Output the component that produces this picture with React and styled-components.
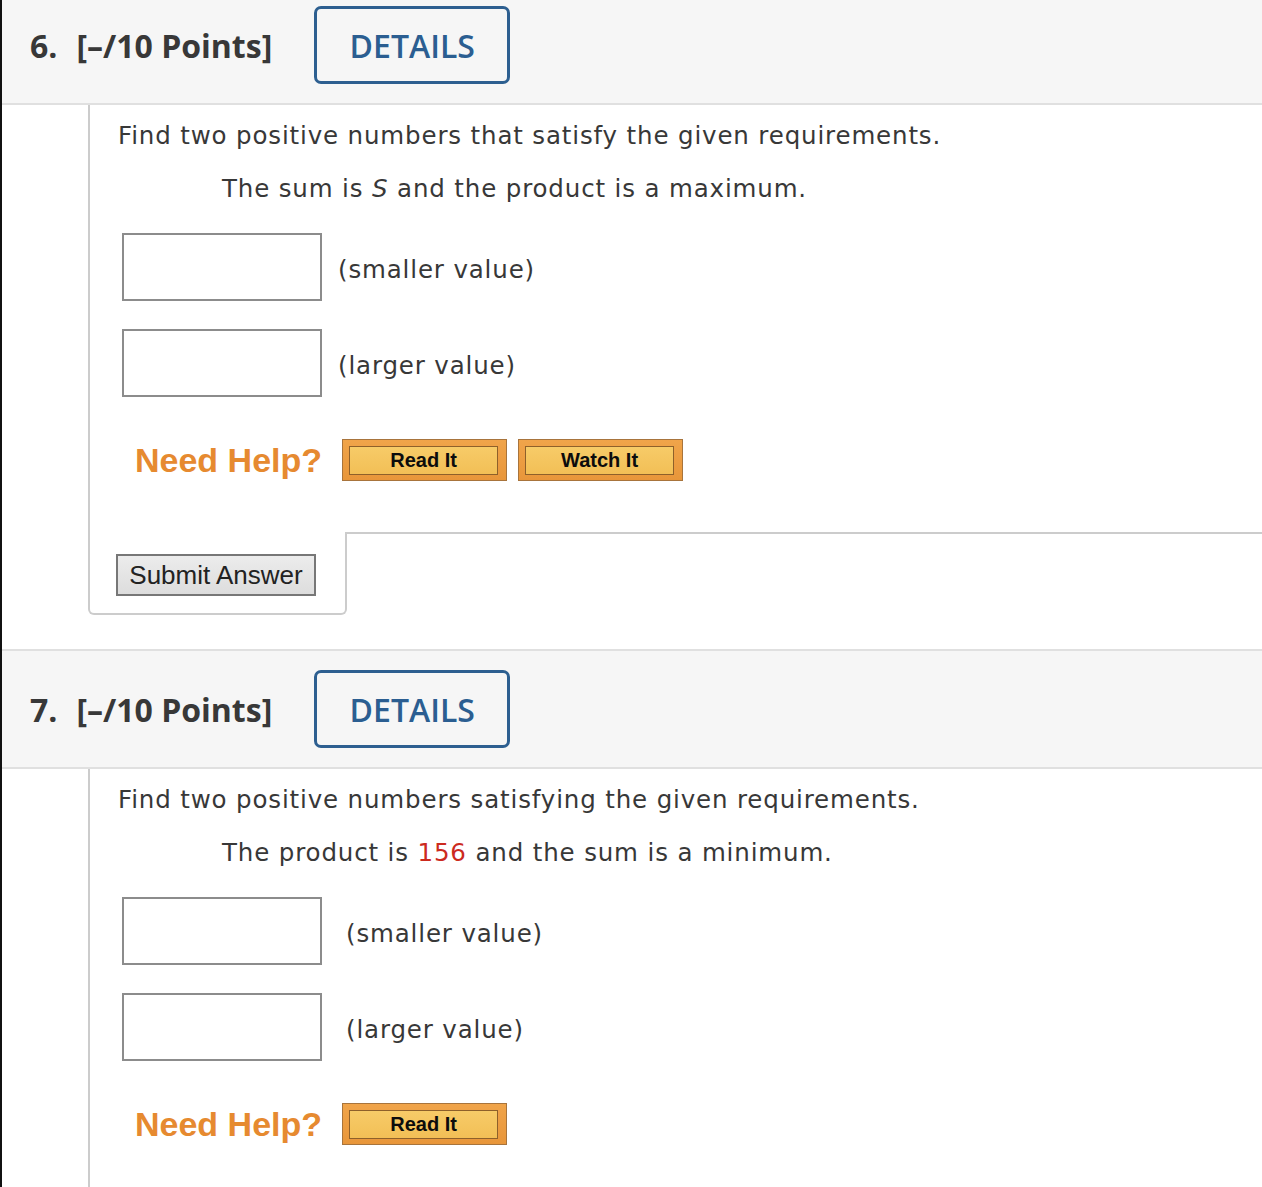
import React from 'react'
import styled, { createGlobalStyle } from 'styled-components'

const GlobalStyle = createGlobalStyle`
  body {
    margin: 0;
    background: #fff;
  }
`

const Page = styled.div`
  border-left: 2px solid #111;
  height: 1187px;
  overflow: hidden;
  box-sizing: border-box;
`

const Header = styled.div`
  display: flex;
  align-items: center;
  background: #f6f6f6;
  border-top: ${p => (p.$first ? 'none' : '2px solid #e0e0e0')};
  border-bottom: 2px solid #e0e0e0;
  padding: ${p => (p.$first ? '6px' : '19px')} 0 19px 28px;
  font-family: 'Open Sans', sans-serif;
  color: #383838;
`

const Number = styled.span`
  font-size: 32px;
  font-weight: 700;
  margin-right: 19px;
`

const Points = styled.span`
  font-size: 32px;
  font-weight: 700;
`

const DetailsButton = styled.div`
  margin-left: 42px;
  width: 196px;
  height: 78px;
  box-sizing: border-box;
  border: 3px solid #2d5f90;
  border-radius: 7px;
  display: flex;
  align-items: center;
  justify-content: center;
  font-size: 32px;
  font-weight: 600;
  color: #2b5e91;
`

const Content = styled.div`
  margin-left: 86px;
  border-left: 2px solid #cccccc;
  padding: 15px 0 ${p => p.$pad || 0}px 28px;
  font-family: 'DejaVu Sans', Verdana, sans-serif;
  color: #383838;
  font-size: 24.5px;
  letter-spacing: 0.85px;
`

const Prompt = styled.p`
  margin: 0;
  line-height: 32px;
`

const Statement = styled.p`
  margin: 21px 0 0 104px;
  line-height: 32px;
`

const Red = styled.span`
  color: #cc2a1e;
`

const AnswerRow = styled.div`
  display: flex;
  align-items: center;
  gap: ${p => p.$gap}px;
  margin: ${p => p.$top}px 0 0 4px;
`

const Label = styled.span`
  padding-top: 4px;
`

const AnswerBox = styled.div`
  width: 200px;
  height: 68px;
  box-sizing: border-box;
  border: 2px solid #8c8c8c;
  background: #fff;
`

const HelpRow = styled.div`
  display: flex;
  align-items: center;
  margin: 42px 0 0 17px;
  gap: 11px;
  letter-spacing: 0;
`

const NeedHelp = styled.span`
  font-family: 'Liberation Sans', Arial, sans-serif;
  font-weight: 700;
  font-size: 34px;
  color: #e68a30;
  margin-right: 9px;
`

const HelpButton = styled.div`
  width: 165px;
  height: 42px;
  box-sizing: border-box;
  border: 1px solid #a8743c;
  background: linear-gradient(#f0a44a, #e8963a);
  padding: 6px 8px 5px 6px;
`

const HelpInner = styled.div`
  height: 100%;
  box-sizing: border-box;
  border: 1px solid #8e602a;
  background: linear-gradient(#f7cb68, #f2bf56);
  display: flex;
  align-items: center;
  justify-content: center;
  font-family: 'Liberation Sans', Arial, sans-serif;
  font-weight: 700;
  font-size: 20px;
  color: #0c0c0c;
`

const Footer = styled.div`
  display: flex;
  margin-left: 86px;
`

const SubmitTab = styled.div`
  width: 259px;
  box-sizing: border-box;
  border: 2px solid #cccccc;
  border-top: none;
  border-radius: 0 0 6px 6px;
  padding: 22px 0 17px 26px;
`

const Filler = styled.div`
  flex: 1;
  border-top: 2px solid #cccccc;
`

const SubmitButton = styled.div`
  width: 200px;
  height: 42px;
  box-sizing: border-box;
  border: 2px solid #777;
  background: linear-gradient(#ececec, #dddddd);
  display: flex;
  align-items: center;
  justify-content: center;
  font-family: 'Liberation Sans', Arial, sans-serif;
  font-size: 26px;
  color: #222;
`

const Gap = styled.div`
  height: 34px;
`

function Answers({ gap }) {
  return (
    <>
      <AnswerRow $gap={gap} $top={28}>
        <AnswerBox />
        <Label>(smaller value)</Label>
      </AnswerRow>
      <AnswerRow $gap={gap} $top={28}>
        <AnswerBox />
        <Label>(larger value)</Label>
      </AnswerRow>
    </>
  )
}

function QuestionHeader({ num, first }) {
  return (
    <Header $first={first}>
      <Number>{num}.</Number>
      <Points>[–/10 Points]</Points>
      <DetailsButton>DETAILS</DetailsButton>
    </Header>
  )
}

export default function App() {
  return (
    <Page>
      <GlobalStyle />
      <QuestionHeader num={6} first />
      <Content $pad={51}>
        <Prompt>Find two positive numbers that satisfy the given requirements.</Prompt>
        <Statement>
          The sum is <i>S</i> and the product is a maximum.
        </Statement>
        <Answers gap={16} />
        <HelpRow>
          <NeedHelp>Need Help?</NeedHelp>
          <HelpButton><HelpInner>Read It</HelpInner></HelpButton>
          <HelpButton><HelpInner>Watch It</HelpInner></HelpButton>
        </HelpRow>
      </Content>
      <Footer>
        <SubmitTab>
          <SubmitButton>Submit Answer</SubmitButton>
        </SubmitTab>
        <Filler />
      </Footer>
      <Gap />
      <QuestionHeader num={7} />
      <Content $pad={200}>
        <Prompt>Find two positive numbers satisfying the given requirements.</Prompt>
        <Statement>
          The product is <Red>156</Red> and the sum is a minimum.
        </Statement>
        <Answers gap={24} />
        <HelpRow>
          <NeedHelp>Need Help?</NeedHelp>
          <HelpButton><HelpInner>Read It</HelpInner></HelpButton>
        </HelpRow>
      </Content>
    </Page>
  )
}
